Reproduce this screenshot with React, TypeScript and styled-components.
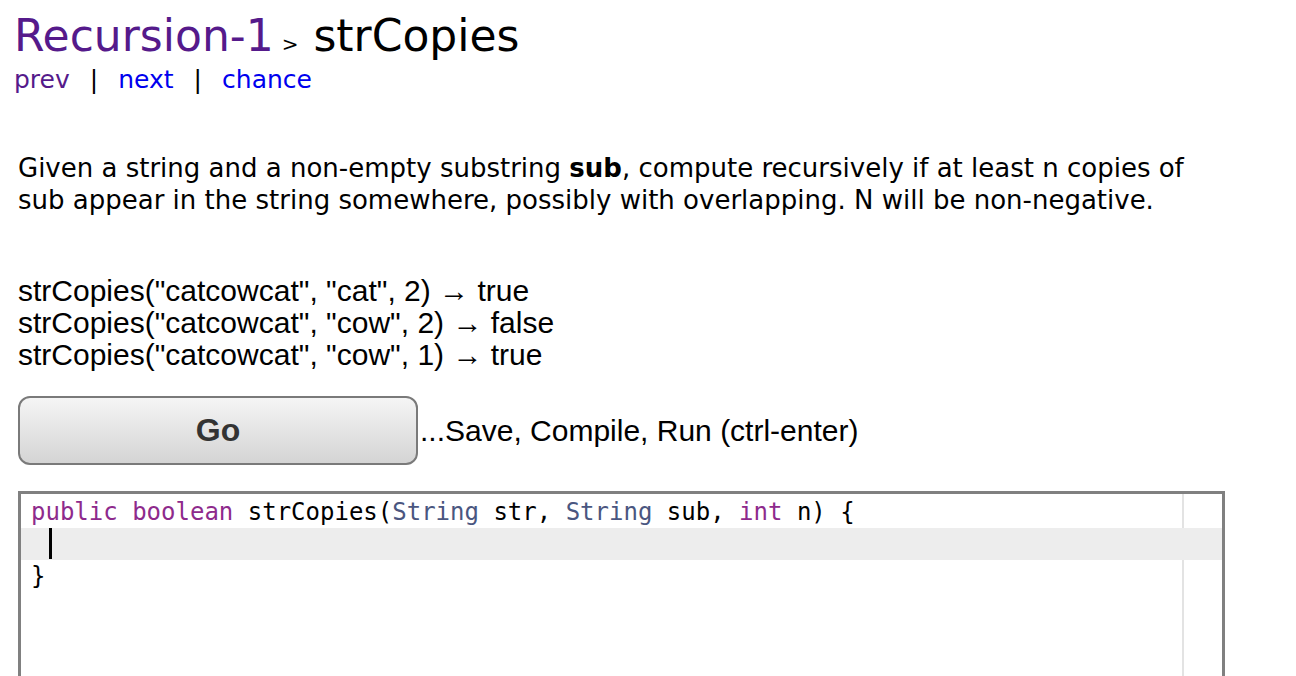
import React from "react";
import styled, { createGlobalStyle } from "styled-components";

const Global = createGlobalStyle`
  html, body { margin: 0; padding: 0; background: #fff; }
  body { overflow: hidden; }
`;

const Page = styled.div`
  padding: 11px 0 0 14px;
  font-family: "DejaVu Sans", Verdana, sans-serif;
  color: #000;
`;

const TitleRow = styled.div`
  display: flex;
  align-items: baseline;
  font-size: 44px;
  line-height: 50px;
  white-space: nowrap;
`;

const Crumb = styled.a`
  color: #551a8b;
  text-decoration: none;
`;

const Sep = styled.span`
  font-size: 20px;
  margin: 0 15px 0 8px;
`;

const Nav = styled.div`
  font-size: 25px;
  line-height: 32px;
  margin-top: -5px;
`;

const NavLink = styled.a<{ $visited?: boolean }>`
  color: ${(p) => (p.$visited ? "#551a8b" : "#0000ee")};
  text-decoration: none;
`;

const Bar = styled.span`
  margin: 0 20px;
`;

const Content = styled.div`
  padding-left: 4px;
`;

const Desc = styled.p`
  margin: 56px 0 0 0;
  font-size: 26px;
  line-height: 32px;
  width: 1200px;
`;

const Examples = styled.div`
  margin-top: 59px;
  font-family: "Liberation Sans", Arial, sans-serif;
  font-size: 30px;
  line-height: 32px;
`;

const GoRow = styled.div`
  display: flex;
  align-items: center;
  margin-top: 25px;
  gap: 2px;
`;

const GoButton = styled.button`
  width: 400px;
  height: 69px;
  border: 2px solid #7a7a7a;
  border-radius: 12px;
  background: linear-gradient(#f5f5f5, #d4d4d4);
  font-family: "Liberation Sans", Arial, sans-serif;
  font-weight: bold;
  font-size: 32px;
  color: #333;
  padding: 0;
`;

const Hint = styled.span`
  font-family: "Liberation Sans", Arial, sans-serif;
  font-size: 30px;
`;

const Editor = styled.div`
  position: relative;
  margin-top: 26px;
  width: 1201px;
  height: 300px;
  border: 3px solid #808080;
  padding-top: 2px;
  font-family: "DejaVu Sans Mono", monospace;
  font-size: 24px;
  line-height: 32px;
  white-space: pre;
`;

const CodeLine = styled.div<{ $active?: boolean }>`
  position: relative;
  height: 32px;
  padding-left: 10px;
  background: ${(p) => (p.$active ? "#ededed" : "transparent")};
`;

const PrintMargin = styled.div`
  position: absolute;
  top: 0;
  bottom: 0;
  left: 1161px;
  width: 2px;
  background: #e3e3e3;
`;

const Cursor = styled.span`
  position: absolute;
  left: 28px;
  top: 0;
  width: 3px;
  height: 31px;
  background: #000;
`;

const Kw = styled.span`
  color: #8e2a8c;
`;
const Ty = styled.span`
  color: #4a5680;
`;

export default function App() {
  return (
    <>
      <Global />
      <Page>
        <TitleRow>
          <Crumb href="#">Recursion-1</Crumb>
          <Sep>&gt;</Sep>
          <span>strCopies</span>
        </TitleRow>
        <Nav>
          <NavLink href="#" $visited>prev</NavLink>
          <Bar>|</Bar>
          <NavLink href="#">next</NavLink>
          <Bar>|</Bar>
          <NavLink href="#">chance</NavLink>
        </Nav>
        <Content>
          <Desc>
            Given a string and a non-empty substring <b>sub</b>, compute recursively if at least n copies of sub appear
            in the string somewhere, possibly with overlapping. N will be non-negative.
          </Desc>
          <Examples>
            <div>strCopies("catcowcat", "cat", 2) → true</div>
            <div>strCopies("catcowcat", "cow", 2) → false</div>
            <div>strCopies("catcowcat", "cow", 1) → true</div>
          </Examples>
          <GoRow>
            <GoButton>Go</GoButton>
            <Hint>...Save, Compile, Run (ctrl-enter)</Hint>
          </GoRow>
          <Editor>
            <PrintMargin />
            <CodeLine>
              <Kw>public</Kw> <Kw>boolean</Kw> strCopies(<Ty>String</Ty> str, <Ty>String</Ty> sub, <Kw>int</Kw> n) {"{"}
            </CodeLine>
            <CodeLine $active>
              <Cursor />
            </CodeLine>
            <CodeLine>{"}"}</CodeLine>
          </Editor>
        </Content>
      </Page>
    </>
  );
}
